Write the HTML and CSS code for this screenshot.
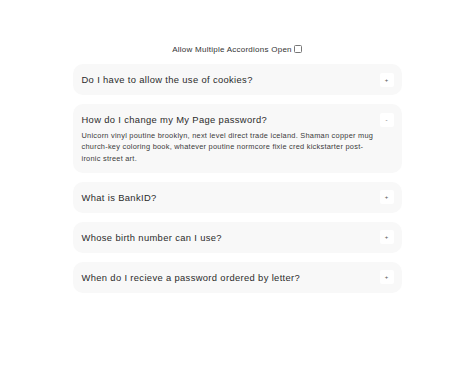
FILE: index.html
```html
<!DOCTYPE html>
<html>
<head>
<meta charset="utf-8">
<link rel="stylesheet" href="styles.css">
</head>
<body>
<div class="wrap">
  <div class="toggle">Allow Multiple Accordions Open <span class="box"></span></div>
  <div class="list">
    <div class="card">
      <div class="head"><span class="title">Do I have to allow the use of cookies?</span><span class="btn">+</span></div>
    </div>
    <div class="card">
      <div class="head"><span class="title">How do I change my My Page password?</span><span class="btn">-</span></div>
      <p class="body">Unicorn vinyl poutine brooklyn, next level direct trade iceland. Shaman copper mug church-key coloring book, whatever poutine normcore fixie cred kickstarter post-ironic street art.</p>
    </div>
    <div class="card">
      <div class="head"><span class="title">What is BankID?</span><span class="btn">+</span></div>
    </div>
    <div class="card">
      <div class="head"><span class="title">Whose birth number can I use?</span><span class="btn">+</span></div>
    </div>
    <div class="card">
      <div class="head"><span class="title">When do I recieve a password ordered by letter?</span><span class="btn">+</span></div>
    </div>
  </div>
</div>
</body>
</html>
```
FILE: styles.css
```css
html, body { margin: 0; padding: 0; background: #fff; }
body { font-family: "Liberation Sans", Arial, sans-serif; color: #222; }
.wrap { width: 329px; margin: 0 auto; padding-top: 44px; }
.toggle { display: flex; justify-content: center; align-items: center; gap: 2px; font-size: 8px; letter-spacing: 0.25px; color: #333; height: 10px; }
.box { width: 6px; height: 6px; border: 1px solid #777; border-radius: 1.5px; background: #fff; }
.list { display: flex; flex-direction: column; gap: 9px; margin-top: 10px; }
.card { background: #f8f8f8; border-radius: 10px; padding: 9px; }
.head { display: flex; align-items: center; justify-content: space-between; height: 13px; }
.title { font-size: 9.4px; letter-spacing: 0.35px; color: #2b2b2b; }
.btn { width: 14px; height: 14px; background: #fff; border-radius: 2px; font-size: 6px; line-height: 14px; text-align: center; color: #555; margin-right: -1px; }
.body { margin: 4px 16px 0 0; font-size: 7.4px; line-height: 11.3px; letter-spacing: 0.25px; color: #3a3a3a; }
```
